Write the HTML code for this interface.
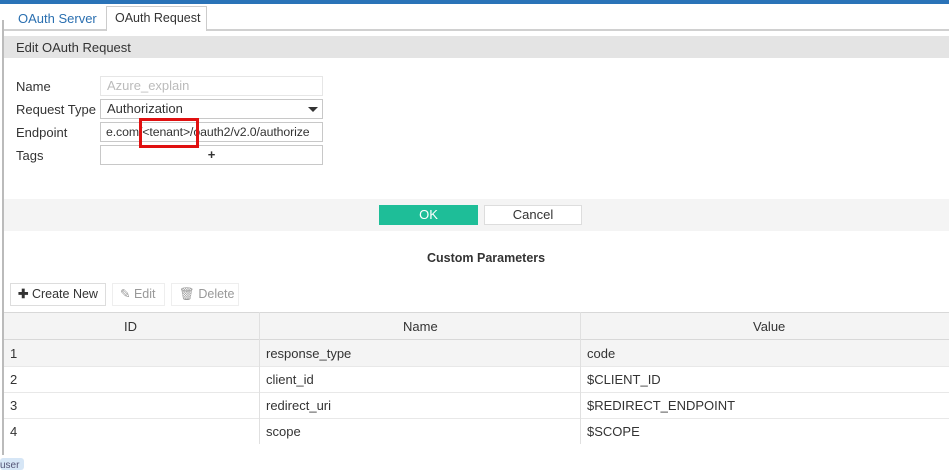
<!DOCTYPE html>
<html><head><style>
*{margin:0;padding:0;box-sizing:border-box}
body{width:949px;height:467px;overflow:hidden;background:#fff;font-family:"Liberation Sans",sans-serif;font-size:13px;color:#333;position:relative}
.a{position:absolute;white-space:nowrap}
.lbl{position:absolute;left:16px;font-size:13px;color:#333}
.inp{position:absolute;left:100px;width:223px;height:20px;border:1px solid #c8c8c8;background:#fff;padding-left:6px;line-height:18px;font-size:13px;white-space:nowrap;overflow:hidden}
.btn{position:absolute;height:23px;border:1px solid #ddd;background:#fff;line-height:21px;font-size:13px;padding:0 7px;white-space:nowrap;overflow:hidden}
.cell{position:absolute;font-size:13px}
</style></head><body>
<div class="a" style="left:0;top:0;width:949px;height:4px;background:#2a73b8"></div>
<div class="a" style="left:2px;top:20px;width:2px;height:435px;background:#bbb"></div>
<div class="a" style="left:4px;top:29px;width:945px;height:2px;background:#d0d0d0"></div>
<div class="a" style="left:18px;top:11px;color:#2a6fb0;font-size:13px">OAuth Server</div>
<div class="a" style="left:106px;top:6px;width:101px;height:25px;border:1px solid #ccc;border-bottom:none;background:#fff;padding:4px 0 0 8px;font-size:12.5px;color:#333">OAuth Request</div>
<div class="a" style="left:4px;top:36px;width:945px;height:22px;background:#e4e4e4;padding:4px 0 0 12px;font-size:13px">Edit OAuth Request</div>
<div class="lbl" style="top:79px">Name</div>
<div class="inp" style="top:76px;color:#bbb;border-color:#e6e6e6">Azure_explain</div>
<div class="lbl" style="top:102px">Request Type</div>
<div class="inp" style="top:99px">Authorization<span style="position:absolute;right:4px;top:7px;border-left:5px solid transparent;border-right:5px solid transparent;border-top:5px solid #333"></span></div>
<div class="lbl" style="top:125px">Endpoint</div>
<div class="inp" style="top:122px;padding-left:5px;font-size:12.3px;letter-spacing:-0.1px">e.com/&lt;tenant&gt;/oauth2/v2.0/authorize</div>
<div class="lbl" style="top:148px">Tags</div>
<div class="inp" style="top:145px;text-align:center;font-weight:bold;padding:0">+</div>
<div class="a" style="left:139px;top:118px;width:60px;height:30px;border:3px solid #e01010;z-index:5"></div>
<div class="a" style="left:4px;top:199px;width:945px;height:32px;background:#f4f4f4"></div>
<div class="a" style="left:379px;top:205px;width:99px;height:20px;background:#1ebe98;color:#fff;text-align:center;line-height:20px">OK</div>
<div class="a" style="left:484px;top:205px;width:98px;height:20px;background:#fff;border:1px solid #ddd;text-align:center;line-height:18px">Cancel</div>
<div class="a" style="left:427px;top:251px;font-weight:bold;font-size:12.5px">Custom Parameters</div>
<div class="btn" style="left:10px;top:283px;width:96px;color:#333;font-size:12.5px"><b>✚</b> Create New</div>
<div class="btn" style="left:112px;top:283px;width:53px;color:#999;border-color:#eee;font-size:12.5px">✎ Edit</div>
<div class="btn" style="left:171px;top:283px;width:68px;color:#999;border-color:#eee;font-size:12.5px">🗑 Delete</div>
<div class="a" style="left:4px;top:312px;width:945px;height:28px;background:#f4f4f4;border-top:1px solid #d8d8d8;border-bottom:1px solid #d8d8d8"></div>
<div class="a" style="left:4px;top:340px;width:945px;height:26px;background:#f4f4f4"></div>
<div class="a" style="left:4px;top:366px;width:945px;height:1px;background:#e8e8e8"></div>
<div class="a" style="left:4px;top:392px;width:945px;height:1px;background:#e8e8e8"></div>
<div class="a" style="left:4px;top:418px;width:945px;height:1px;background:#e8e8e8"></div>
<div class="a" style="left:259px;top:312px;width:1px;height:132px;background:#e0e0e0"></div>
<div class="a" style="left:580px;top:312px;width:1px;height:132px;background:#e0e0e0"></div>
<div class="cell" style="left:124px;top:319px">ID</div>
<div class="cell" style="left:403px;top:319px">Name</div>
<div class="cell" style="left:753px;top:319px">Value</div>
<div class="cell" style="left:10px;top:346px">1</div><div class="cell" style="left:266px;top:346px">response_type</div><div class="cell" style="left:587px;top:346px">code</div>
<div class="cell" style="left:10px;top:372px">2</div><div class="cell" style="left:266px;top:372px">client_id</div><div class="cell" style="left:587px;top:372px">$CLIENT_ID</div>
<div class="cell" style="left:10px;top:398px">3</div><div class="cell" style="left:266px;top:398px">redirect_uri</div><div class="cell" style="left:587px;top:398px">$REDIRECT_ENDPOINT</div>
<div class="cell" style="left:10px;top:424px">4</div><div class="cell" style="left:266px;top:424px">scope</div><div class="cell" style="left:587px;top:424px">$SCOPE</div>
<div class="a" style="left:0;top:458px;width:24px;height:12px;background:#d6e6f6;border-radius:3px;font-size:10px;color:#557;line-height:16px;overflow:hidden">user</div>
</body></html>
